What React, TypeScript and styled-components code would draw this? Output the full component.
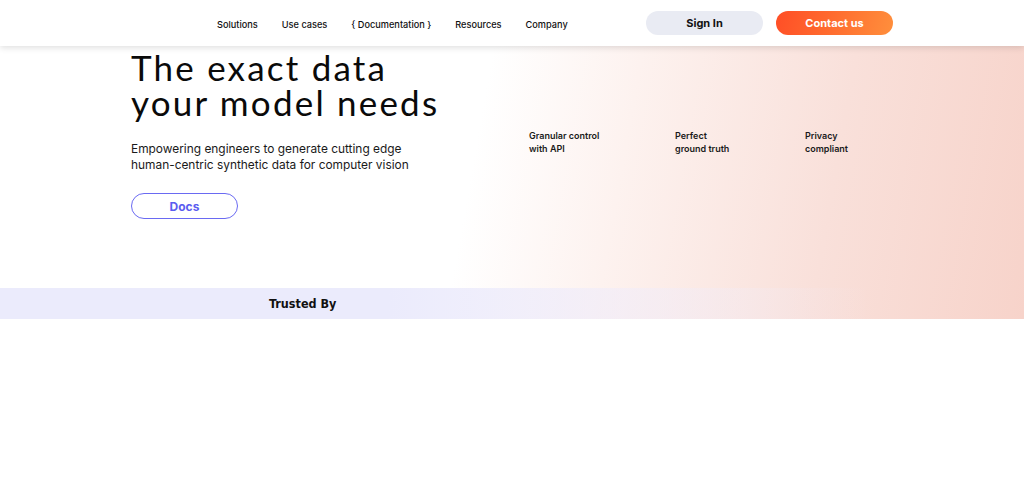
import * as React from "react";
import styled, {createGlobalStyle} from "styled-components";

const GlobalStyle = createGlobalStyle`
    html, body {
        margin: 0;
        padding: 0;
        background: #ffffff;
    }
    body {
        font-family: "Inter", "Noto Sans", sans-serif;
        color: #111;
    }
`;

const navLinks = ["Solutions", "Use cases", "{ Documentation }", "Resources", "Company"];

const features = [
    {text: ["Granular control", "with API"], width: 146},
    {text: ["Perfect", "ground truth"], width: 130},
    {text: ["Privacy", "compliant"], width: 100},
];

const Page = styled.div`
    width: 1024px;
    min-height: 482px;
    background: #fff;
`;

const NavBar = styled.header`
    position: relative;
    z-index: 2;
    height: 46px;
    display: flex;
    align-items: center;
    background: #fff;
    box-shadow: 0 2px 6px rgba(0, 0, 0, 0.12);
`;

const NavLinks = styled.nav`
    display: flex;
    gap: 24px;
    margin-left: 217px;
    margin-top: 2px;
`;

const NavLink = styled.a`
    font-family: "Inter", sans-serif;
    font-size: 9.2px;
    font-weight: 500;
    color: #111;
    text-decoration: none;
`;

const NavActions = styled.div`
    display: flex;
    gap: 13px;
    margin-left: auto;
    margin-right: 131px;
`;

const PillButton = styled.button<{$primary?: boolean}>`
    width: 117px;
    height: 24px;
    border: none;
    border-radius: 12px;
    font-family: "Inter", sans-serif;
    font-size: 11px;
    font-weight: 700;
    cursor: pointer;
    color: ${p => p.$primary ? "#fff" : "#111"};
    background: ${p => p.$primary
        ? "linear-gradient(105deg, #ff4e26 0%, #ff6a2e 45%, #ff8f3c 100%)"
        : "#e9ebf3"};
`;

const Hero = styled.section`
    background: linear-gradient(100deg, #ffffff 46%, #fdf2ef 60%, #f9e0da 80%, #f7d3ca 100%);
`;

const HeroBody = styled.div`
    height: 242px;
    display: flex;
`;

const HeroText = styled.div`
    padding-left: 131px;
    width: 400px;
`;

const Title = styled.h1`
    margin: 4px 0 0;
    font-family: "Lato", "DejaVu Sans", sans-serif;
    font-size: 35px;
    font-weight: 400;
    line-height: 35px;
    letter-spacing: 2.2px;
    color: #0a0a0a;
`;

const Lead = styled.p`
    margin: 21px 0 0;
    font-family: "Inter", sans-serif;
    font-size: 11.9px;
    line-height: 16px;
    color: #1a1a1a;
`;

const OutlineButton = styled.button`
    margin-top: 20px;
    width: 107px;
    height: 26px;
    border: 1px solid #6a6af2;
    border-radius: 13px;
    background: transparent;
    color: #5b5cf0;
    font-family: "Inter", sans-serif;
    font-size: 12px;
    font-weight: 700;
`;

const Features = styled.div`
    display: flex;
    margin-left: -2px;
    padding-top: 83px;
`;

const Feature = styled.div<{$width: number}>`
    width: ${p => p.$width}px;
    font-family: "Inter", sans-serif;
    font-size: 9px;
    font-weight: 600;
    line-height: 13px;
    color: #1a1a1a;
`;

const TrustedBand = styled.div`
    height: 31px;
    display: flex;
    align-items: center;
    background: linear-gradient(90deg, #ebebfc 0%, #ebebfc 38%, rgba(240, 236, 250, 0.6) 60%, rgba(247, 220, 214, 0) 85%);
`;

const TrustedLabel = styled.h3`
    margin: 0 0 0 269px;
    font-family: "DejaVu Sans Condensed", "DejaVu Sans", sans-serif;
    font-size: 12.5px;
    font-weight: 700;
    color: #111;
`;

export default function App() {
    return (
        <Page>
            <GlobalStyle/>
            <NavBar>
                <NavLinks>
                    {navLinks.map(l => <NavLink key={l} href="#">{l}</NavLink>)}
                </NavLinks>
                <NavActions>
                    <PillButton>Sign In</PillButton>
                    <PillButton $primary>Contact us</PillButton>
                </NavActions>
            </NavBar>
            <Hero>
                <HeroBody>
                    <HeroText>
                        <Title>The exact data<br/>your model needs</Title>
                        <Lead>
                            Empowering engineers to generate cutting edge<br/>
                            human-centric synthetic data for computer vision
                        </Lead>
                        <OutlineButton>Docs</OutlineButton>
                    </HeroText>
                    <Features>
                        {features.map(f => (
                            <Feature key={f.text[0]} $width={f.width}>
                                {f.text[0]}<br/>{f.text[1]}
                            </Feature>
                        ))}
                    </Features>
                </HeroBody>
                <TrustedBand>
                    <TrustedLabel>Trusted By</TrustedLabel>
                </TrustedBand>
            </Hero>
        </Page>
    );
}
